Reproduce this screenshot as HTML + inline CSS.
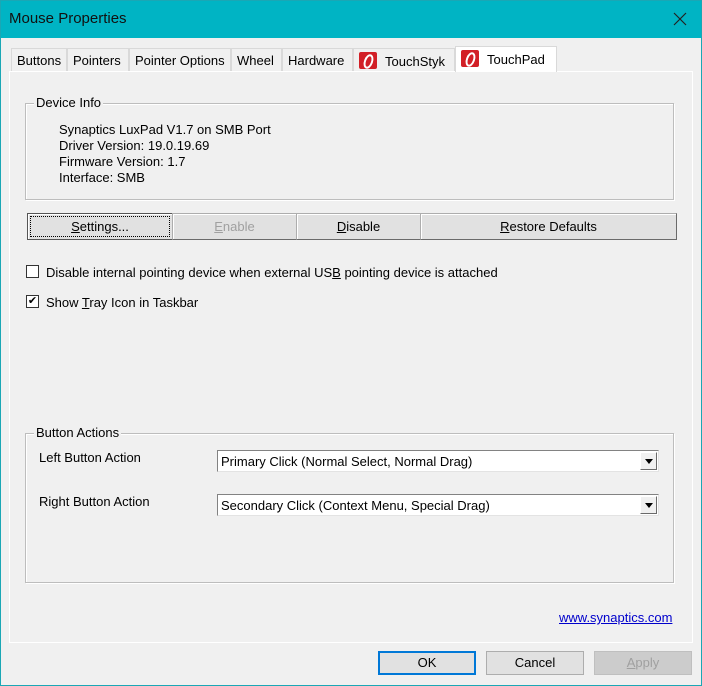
<!DOCTYPE html>
<html><head><meta charset="utf-8"><style>
*{margin:0;padding:0;box-sizing:border-box}
body{width:702px;height:686px;background:#f0f0f0;font-family:"Liberation Sans",Arial,sans-serif;font-size:13px;color:#000;position:relative;overflow:hidden}
.a{position:absolute;white-space:nowrap}
.win{position:absolute;left:0;top:0;width:702px;height:686px;border:1px solid #1aa7b5}
.title{position:absolute;left:0;top:0;width:702px;height:38px;background:#00b4c4}
.tab{position:absolute;top:48px;height:23px;border:1px solid #d9d9d9;border-bottom:none;background:#f0f0f0;padding:4px 4px 0 5px;font-size:13px}
.page{position:absolute;left:9px;top:71px;width:684px;height:572px;border:1px solid #fff;background:#f0f0f0}
.grp{position:absolute;border:1px solid #bdbdbd;box-shadow:inset 1px 1px 0 #fff,1px 1px 0 #fff}
.leg{position:absolute;background:#f0f0f0;padding:0 2px;top:-9px;left:8px}
.btn{position:absolute;top:213px;height:27px;background:#e1e1e1;border:1px solid #adadad;border-right-color:#6a6a6a;border-bottom-color:#6a6a6a;box-shadow:inset 1px 1px 0 #fff;text-align:center;line-height:25px}
.cb{position:absolute;width:13px;height:13px;border:1px solid #333;background:#fff}
.combo{position:absolute;left:217px;width:442px;height:22px;background:#fff;border:1px solid #828282;border-right-color:#e3e3e3;border-bottom-color:#e3e3e3;padding:2px 3px;line-height:16px}
.arr{position:absolute;right:1px;top:1px;width:17px;height:18px;background:#f0f0f0;border:1px solid #fff;border-right-color:#6a6a6a;border-bottom-color:#6a6a6a}
.arr:after{content:"";position:absolute;left:4px;top:6px;border-left:4px solid transparent;border-right:4px solid transparent;border-top:5px solid #000}
.icon{display:inline-block;width:18px;height:17px;background:#d21f26;border-radius:2px;vertical-align:-3px;margin-right:8px;position:relative}
.icon:after{content:"";position:absolute;left:5px;top:2px;width:5px;height:11px;border:2px solid #fff;border-radius:50%;transform:rotate(20deg)}
.bb{position:absolute;top:651px;width:98px;height:24px;border:1px solid #adadad;background:#e1e1e1;text-align:center;line-height:22px}
</style></head><body>
<div class="title"></div>
<div class="win"></div>
<div class="a" style="left:9px;top:10px;font-size:15px;color:#111">Mouse Properties</div>
<svg class="a" style="left:673px;top:12px" width="14" height="14"><path d="M1 1L13 13M13 1L1 13" stroke="#222" stroke-width="1.2"/></svg>

<div class="page"></div>
<div class="tab" style="left:11px;width:56px">Buttons</div>
<div class="tab" style="left:67px;width:62px">Pointers</div>
<div class="tab" style="left:129px;width:102px">Pointer Options</div>
<div class="tab" style="left:231px;width:51px">Wheel</div>
<div class="tab" style="left:282px;width:71px">Hardware</div>
<div class="tab" style="left:353px;width:102px;padding-top:3px"><span class="icon"></span>TouchStyk</div>
<div class="tab" style="left:455px;top:46px;height:26px;width:102px;background:#fff;padding-top:3px;border-color:#d9d9d9"><span class="icon"></span>TouchPad</div>

<div class="grp" style="left:25px;top:103px;width:649px;height:97px"><div class="leg">Device Info</div></div>
<div class="a" style="left:59px;top:122px;line-height:16px">Synaptics LuxPad V1.7 on SMB Port<br>Driver Version: 19.0.19.69<br>Firmware Version: 1.7<br>Interface: SMB</div>

<div class="btn" style="left:27px;width:146px;border:1px solid #555"><span style="display:block;margin:2px;border:1px dotted #000;line-height:19px"><u>S</u>ettings...</span></div>
<div class="btn" style="left:172px;width:125px;color:#a0a0a0"><u>E</u>nable</div>
<div class="btn" style="left:296px;width:125px"><u>D</u>isable</div>
<div class="btn" style="left:420px;width:257px"><u>R</u>estore Defaults</div>

<div class="cb" style="left:26px;top:265px"></div>
<div class="a" style="left:46px;top:265px">Disable internal pointing device when external US<u>B</u> pointing device is attached</div>
<div class="cb" style="left:26px;top:295px;font-size:11px;line-height:11px;text-align:center">✔</div>
<div class="a" style="left:46px;top:295px">Show <u>T</u>ray Icon in Taskbar</div>

<div class="grp" style="left:25px;top:433px;width:649px;height:150px"><div class="leg">Button Actions</div></div>
<div class="a" style="left:39px;top:450px">Left Button Action</div>
<div class="a" style="left:39px;top:494px">Right Button Action</div>
<div class="combo" style="top:450px;padding-top:3px">Primary Click (Normal Select, Normal Drag)<div class="arr"></div></div>
<div class="combo" style="top:494px;padding-top:3px">Secondary Click (Context Menu, Special Drag)<div class="arr"></div></div>

<div class="a" style="left:559px;top:610px;color:#0000cc;text-decoration:underline">www.synaptics.com</div>

<div class="bb" style="left:378px;border:2px solid #0078d7;line-height:20px">OK</div>
<div class="bb" style="left:486px">Cancel</div>
<div class="bb" style="left:594px;color:#a0a0a0;background:#cccccc;border-color:#bfbfbf"><u>A</u>pply</div>
</body></html>
